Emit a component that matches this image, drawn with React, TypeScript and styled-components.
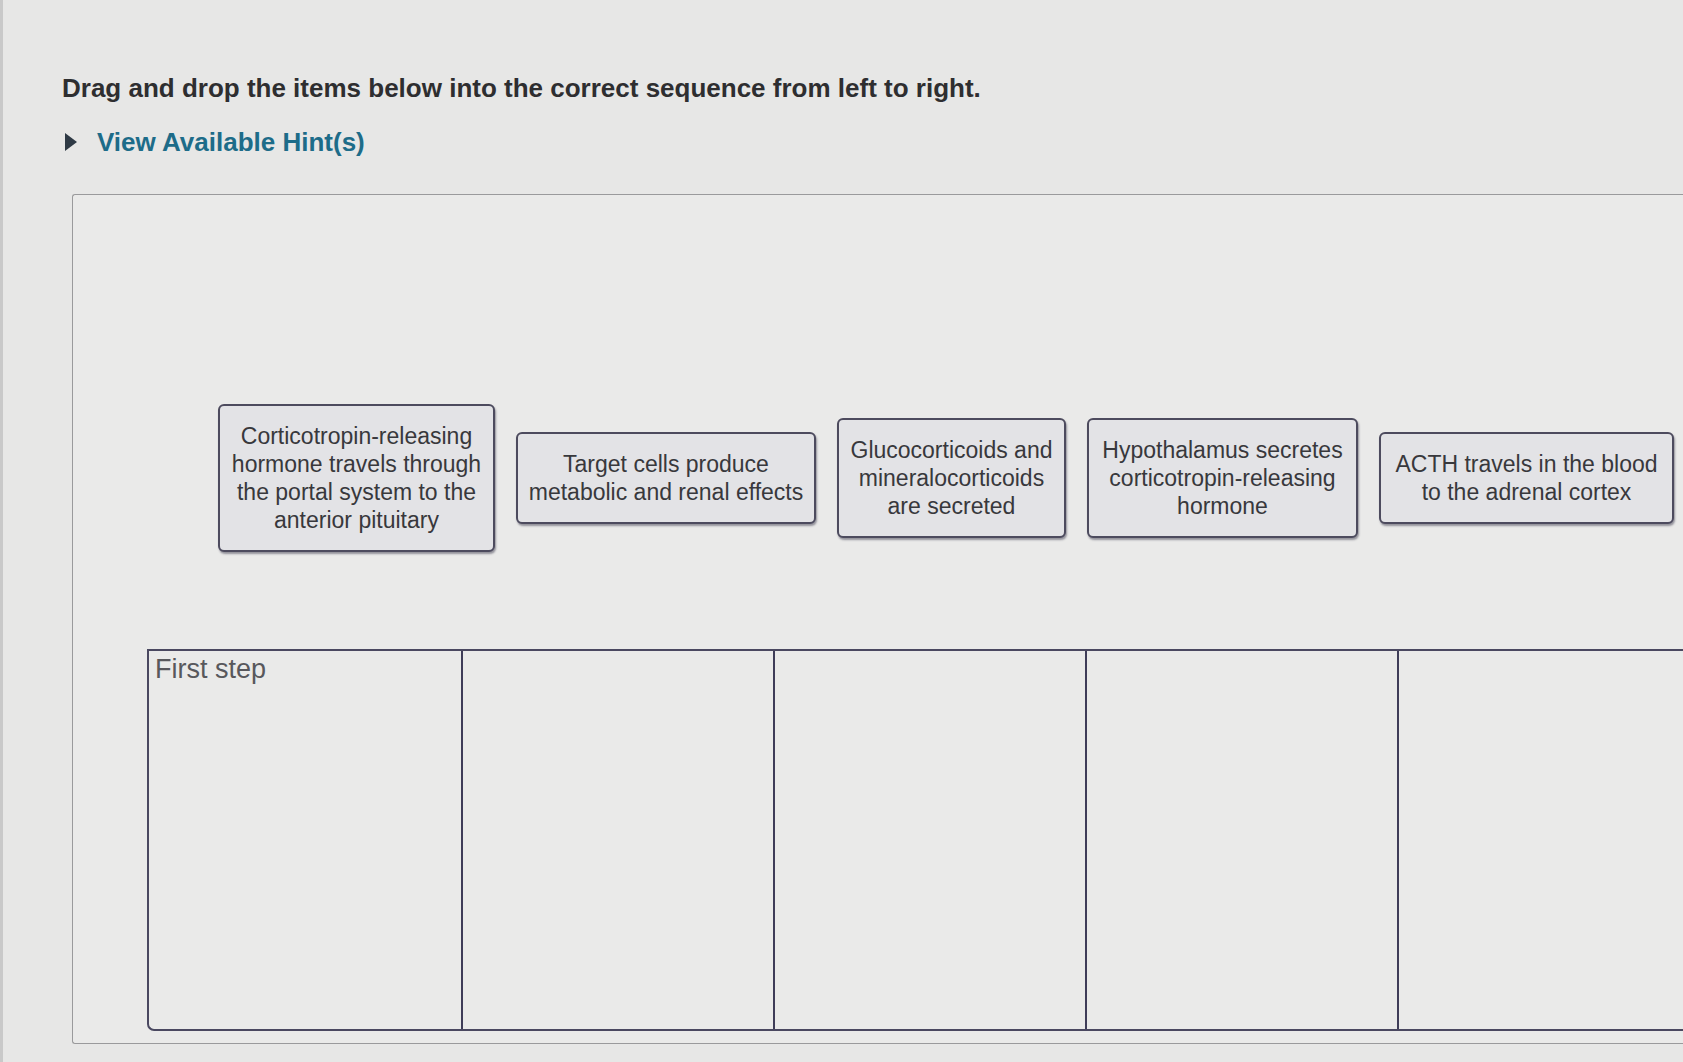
import styled, { createGlobalStyle } from "styled-components";

const GlobalStyle = createGlobalStyle`
  html, body {
    margin: 0;
    padding: 0;
    background: #e7e7e6;
    overflow: hidden;
  }
  #root {
    width: 1683px;
    height: 1062px;
    overflow: hidden;
  }
`;

const Page = styled.div`
  box-sizing: border-box;
  height: 100%;
  padding: 72px 0 0 59px;
  font-family: "Liberation Sans", Arial, sans-serif;
  border-left: 3px solid #c9c9c9;
`;

const Heading = styled.h1`
  margin: 0;
  font-size: 26px;
  line-height: 32px;
  font-weight: 700;
  color: #2e2e30;
`;

const HintToggle = styled.div`
  display: flex;
  align-items: center;
  gap: 20px;
  margin-top: 22px;
  margin-left: 3px;
  font-size: 26px;
  line-height: 32px;
  font-weight: 700;
  color: #1d6c89;
`;

const Arrow = styled.span`
  width: 0;
  height: 0;
  border-top: 9px solid transparent;
  border-bottom: 9px solid transparent;
  border-left: 12px solid #2f3a45;
`;

const Panel = styled.div`
  box-sizing: border-box;
  margin: 36px 0 0 10px;
  width: 1700px;
  height: 850px;
  padding: 208px 0 0 145px;
  border: 1px solid #9a9a9c;
  border-right: none;
  border-radius: 3px;
  background: #eaeae9;
`;

const CardRow = styled.div`
  display: flex;
  align-items: center;
  gap: 21px;
  height: 150px;
`;

const Card = styled.div<{ $width: number }>`
  box-sizing: border-box;
  width: ${({ $width }) => $width}px;
  padding: 16px 8px;
  font-size: 23px;
  line-height: 28px;
  text-align: center;
  color: #38383c;
  background: #e3e3e6;
  border: 2px solid #4d4b5e;
  border-radius: 6px;
  box-shadow: 1px 2px 2px rgba(40, 38, 60, 0.45);
`;

const Sequence = styled.div`
  display: grid;
  grid-template-columns: repeat(5, 312px);
  margin: 96px 0 0 -71px;
  height: 378px;
  border: 2px solid #4a4860;
  border-right: none;
  border-radius: 0 0 0 7px;
`;

const Slot = styled.div<{ $first?: boolean }>`
  border-left: ${({ $first }) => ($first ? "none" : "2px solid #3f3d58")};
  padding: 2px 6px;
  font-size: 27px;
  line-height: 32px;
  color: #58585c;
`;

const cards = [
  { text: "Corticotropin-releasing hormone travels through the portal system to the anterior pituitary", width: 277 },
  { text: "Target cells produce metabolic and renal effects", width: 300 },
  { text: "Glucocorticoids and mineralocorticoids are secreted", width: 229 },
  { text: "Hypothalamus secretes corticotropin-releasing hormone", width: 271 },
  { text: "ACTH travels in the blood to the adrenal cortex", width: 295 },
];

export default function App() {
  return (
    <>
      <GlobalStyle />
      <Page>
        <Heading>Drag and drop the items below into the correct sequence from left to right.</Heading>
        <HintToggle>
          <Arrow />
          View Available Hint(s)
        </HintToggle>
        <Panel>
          <CardRow>
            {cards.map((c) => (
              <Card key={c.text} $width={c.width}>
                {c.text}
              </Card>
            ))}
          </CardRow>
          <Sequence>
            <Slot $first>First step</Slot>
            <Slot />
            <Slot />
            <Slot />
            <Slot />
          </Sequence>
        </Panel>
      </Page>
    </>
  );
}
